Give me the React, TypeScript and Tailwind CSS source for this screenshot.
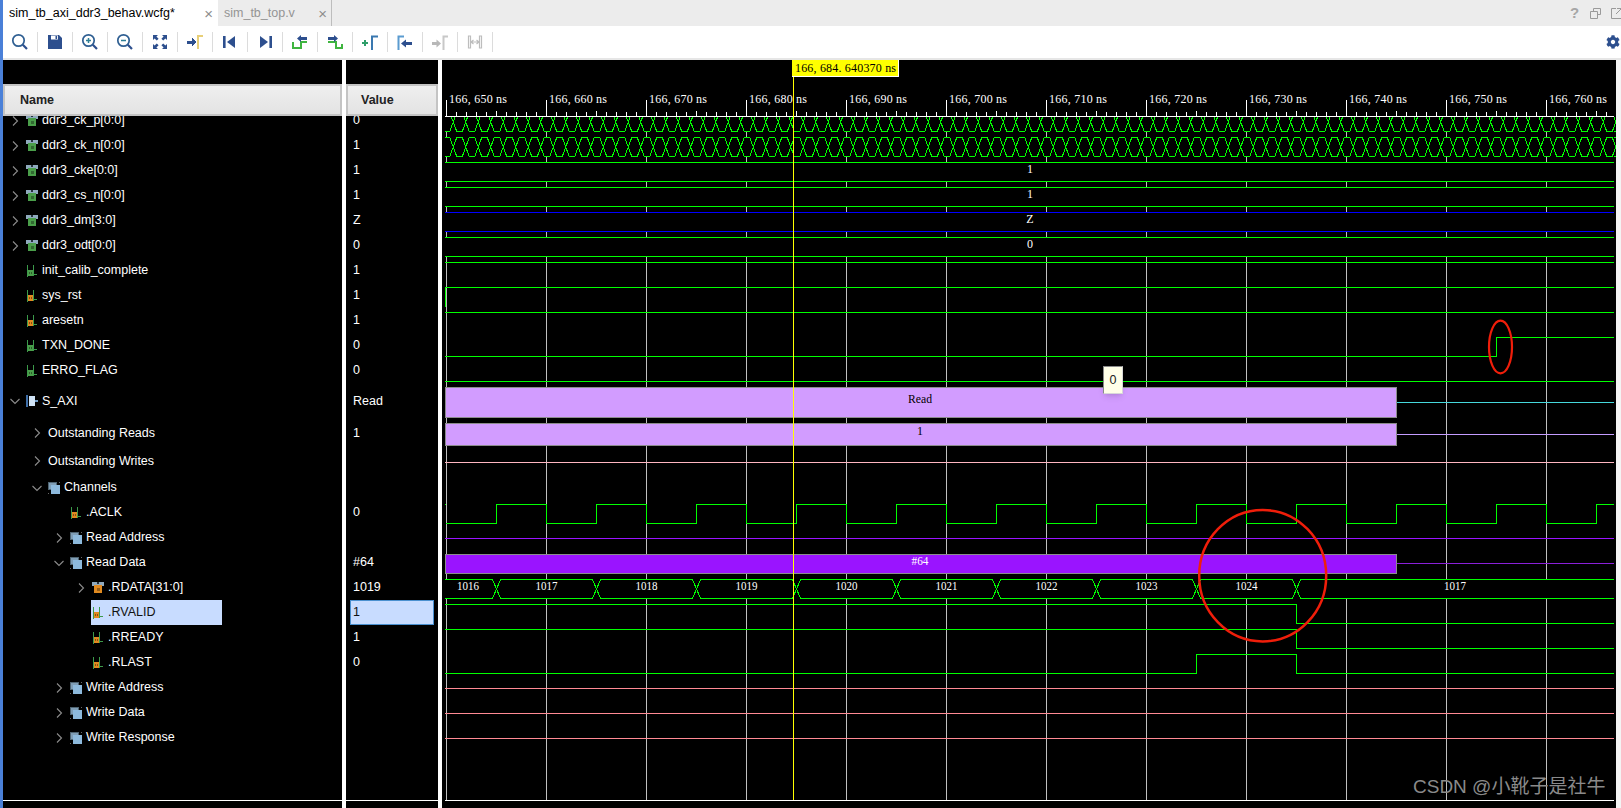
import React from "react";
import { FaCog } from "react-icons/fa";

const GREEN = "#00ff00";
const BLUE = "#2d4f8e";

// ---- small tree icons ----
function SignalIcon({ color }: { color: string }) {
  return (
    <svg width="12" height="12" viewBox="0 0 12 12" shapeRendering="crispEdges" className="shrink-0">
      <rect x="1" y="5" width="7" height="6" fill={color} />
      <path d="M1.5 0V12M7.5 0V11M8 9.5H11" stroke="#3c9a4a" fill="none" />
      <rect x="3" y="7" width="1" height="2" fill="#00000066" />
      <rect x="5" y="7" width="1" height="2" fill="#00000066" />
    </svg>
  );
}

function BusIcon({ color }: { color: string }) {
  return (
    <svg width="12" height="12" viewBox="0 0 12 12" shapeRendering="crispEdges" className="shrink-0">
      <rect x="0" y="0" width="12" height="4" fill="#8fa9bd" />
      <rect x="5" y="0" width="2" height="2" fill="#24313a" />
      <rect x="2" y="3" width="8" height="8" fill={color} />
      <rect x="4.5" y="6" width="3" height="3" fill="#00000055" />
    </svg>
  );
}

function IfaceIcon() {
  return (
    <svg width="12" height="12" viewBox="0 0 12 12" shapeRendering="crispEdges" className="shrink-0">
      <rect x="0" y="0" width="2" height="12" fill="#3f6fa8" />
      <rect x="3" y="1" width="6" height="10" fill="#cfe2f5" />
      <rect x="9" y="5" width="3" height="2" fill="#6f9cc8" />
    </svg>
  );
}

function GroupIcon() {
  return (
    <svg width="12" height="12" viewBox="0 0 12 12" shapeRendering="crispEdges" className="shrink-0">
      <rect x="0" y="0" width="9" height="8" fill="#4f6472" />
      <rect x="1" y="1" width="7" height="6" fill="#7f9db5" />
      <rect x="3" y="3" width="9" height="9" fill="#8db9dc" />
      <rect x="11" y="0" width="1" height="1" fill="#666" />
      <rect x="0" y="11" width="1" height="1" fill="#666" />
    </svg>
  );
}

function Chevron({ dir }: { dir?: "right" | "down" }) {
  if (!dir) return <span className="w-[22px] shrink-0" />;
  return (
    <span className="w-[22px] shrink-0 flex justify-center">
      <svg width="10" height="10" viewBox="0 0 10 10" fill="none" stroke="#8c8c8c" strokeWidth="1.1">
        {dir === "right" ? <path d="M3 .5 7.5 5 3 9.5" /> : <path d="M.5 3 5 7.5 9.5 3" />}
      </svg>
    </span>
  );
}

// ---- tree data ----
type Row = {
  name: string;
  value?: string;
  indent: string;
  height: string;
  chevron?: "right" | "down";
  icon?: "busG" | "busO" | "sigG" | "sigO" | "iface" | "group";
  selected?: boolean;
};

const L0 = "pl-px";
const L1 = "pl-[23px]";
const L2 = "pl-[45px]";
const L3 = "pl-[67px]";
const H = "h-[25px]";

const rows: Row[] = [
  { name: "ddr3_ck_p[0:0]", value: "0", indent: L0, height: H, chevron: "right", icon: "busG" },
  { name: "ddr3_ck_n[0:0]", value: "1", indent: L0, height: H, chevron: "right", icon: "busG" },
  { name: "ddr3_cke[0:0]", value: "1", indent: L0, height: H, chevron: "right", icon: "busG" },
  { name: "ddr3_cs_n[0:0]", value: "1", indent: L0, height: H, chevron: "right", icon: "busG" },
  { name: "ddr3_dm[3:0]", value: "Z", indent: L0, height: H, chevron: "right", icon: "busG" },
  { name: "ddr3_odt[0:0]", value: "0", indent: L0, height: H, chevron: "right", icon: "busG" },
  { name: "init_calib_complete", value: "1", indent: L0, height: H, icon: "sigG" },
  { name: "sys_rst", value: "1", indent: L0, height: H, icon: "sigO" },
  { name: "aresetn", value: "1", indent: L0, height: H, icon: "sigO" },
  { name: "TXN_DONE", value: "0", indent: L0, height: H, icon: "sigG" },
  { name: "ERRO_FLAG", value: "0", indent: L0, height: H, icon: "sigG" },
  { name: "S_AXI", value: "Read", indent: L0, height: "h-[36px]", chevron: "down", icon: "iface" },
  { name: "Outstanding Reads", value: "1", indent: L1, height: "h-[28px]", chevron: "right" },
  { name: "Outstanding Writes", indent: L1, height: "h-[28px]", chevron: "right" },
  { name: "Channels", indent: L1, height: H, chevron: "down", icon: "group" },
  { name: ".ACLK", value: "0", indent: L2, height: H, icon: "sigO" },
  { name: "Read Address", indent: L2, height: H, chevron: "right", icon: "group" },
  { name: "Read Data", value: "#64", indent: L2, height: H, chevron: "down", icon: "group" },
  { name: ".RDATA[31:0]", value: "1019", indent: L3, height: H, chevron: "right", icon: "busO" },
  { name: ".RVALID", value: "1", indent: L3, height: H, icon: "sigO", selected: true },
  { name: ".RREADY", value: "1", indent: L3, height: H, icon: "sigO" },
  { name: ".RLAST", value: "0", indent: L3, height: H, icon: "sigO" },
  { name: "Write Address", indent: L2, height: H, chevron: "right", icon: "group" },
  { name: "Write Data", indent: L2, height: H, chevron: "right", icon: "group" },
  { name: "Write Response", indent: L2, height: H, chevron: "right", icon: "group" },
];

function RowIcon({ icon }: { icon?: Row["icon"] }) {
  if (icon === "busG") return <BusIcon color="#4a9e4a" />;
  if (icon === "busO") return <BusIcon color="#e08a20" />;
  if (icon === "sigG") return <SignalIcon color="#4a9e4a" />;
  if (icon === "sigO") return <SignalIcon color="#e08a20" />;
  if (icon === "iface") return <IfaceIcon />;
  if (icon === "group") return <GroupIcon />;
  return null;
}

// ---- toolbar icons ----
function Glass({ mark }: { mark?: "plus" | "minus" }) {
  return (
    <svg width="18" height="18" viewBox="0 0 18 18" fill="none">
      <circle cx="7.5" cy="7.5" r="5.7" stroke="#2f5f92" strokeWidth="1.7" />
      <path d="M11.8 11.8 16 16" stroke={BLUE} strokeWidth="2.2" />
      {mark && <path d="M5 7.5h5" stroke="#2f7f96" strokeWidth="1.5" />}
      {mark === "plus" && <path d="M7.5 5v5" stroke="#2f7f96" strokeWidth="1.5" />}
    </svg>
  );
}

const toolbarIcons: React.ReactNode[] = [
  <Glass />,
  <svg width="16" height="16" viewBox="0 0 16 16">
    <path d="M1 1h11l3 3v11H1z" fill={BLUE} />
    <rect x="4" y="1.5" width="7" height="4" fill="#fff" />
    <rect x="8.5" y="2" width="1.6" height="3" fill={BLUE} />
  </svg>,
  <Glass mark="plus" />,
  <Glass mark="minus" />,
  <svg width="16" height="16" viewBox="0 0 16 16" fill={BLUE}>
    <path d="M1 1h5L4.4 2.6 6.6 4.8 4.8 6.6 2.6 4.4 1 6zM15 1v5l-1.6-1.6-2.2 2.2-1.8-1.8 2.2-2.2L10 1zM1 15v-5l1.6 1.6 2.2-2.2 1.8 1.8-2.2 2.2L6 15zM15 15h-5l1.6-1.6-2.2-2.2 1.8-1.8 2.2 2.2L15 10z" />
  </svg>,
  <svg width="16" height="16" viewBox="0 0 16 16" shapeRendering="crispEdges">
    <path d="M0 6.5h5V4l4 4-4 4V9.500H0z" fill={BLUE} />
    <path d="M11 15V2h5" stroke="#e8cf78" strokeWidth="2.4" fill="none" />
  </svg>,
  <svg width="14" height="14" viewBox="0 0 14 14" fill={BLUE}>
    <rect x="0" y="1" width="2.6" height="12" />
    <path d="M12 1v12L4 7z" />
  </svg>,
  <svg width="14" height="14" viewBox="0 0 14 14" fill={BLUE}>
    <rect x="11.400" y="1" width="2.6" height="12" />
    <path d="M2 1v12l8-6z" />
  </svg>,
  <svg width="16" height="14" viewBox="0 0 16 14">
    <path d="M1 7v6h8V7h6" fill="none" stroke="#3fb53f" strokeWidth="2" />
    <path d="M5 3.500 9 0v2h6v3H9v2z" fill={BLUE} />
  </svg>,
  <svg width="16" height="14" viewBox="0 0 16 14">
    <path d="M1 7h8v6h6V9" fill="none" stroke="#3fb53f" strokeWidth="2" />
    <path d="M11 3.500 7 0v2H1v3h6v2z" fill={BLUE} />
  </svg>,
  <svg width="16" height="15" viewBox="0 0 16 15">
    <path d="M0 8h6M3 5v6" stroke="#2f9e6a" strokeWidth="2" />
    <path d="M10 15V1.500h6" fill="none" stroke="#3a78b0" strokeWidth="2" />
  </svg>,
  <svg width="16" height="15" viewBox="0 0 16 15">
    <path d="M1.500 15V1.500H7" fill="none" stroke="#5b9bd0" strokeWidth="2" />
    <path d="M4 8.500 9 4.500V7h6v3H9v2.500z" fill={BLUE} />
  </svg>,
  <svg width="16" height="15" viewBox="0 0 16 15">
    <path d="M0 7h4.500V4.500L9 8.500l-4.500 4V10H0z" fill="#b8b8b8" />
    <path d="M11.500 15V1.500H16" fill="none" stroke="#c8c8c8" strokeWidth="2" />
  </svg>,
  <svg width="16" height="14" viewBox="0 0 16 14" fill="none" stroke="#bdbdbd" strokeWidth="1.2">
    <path d="M1.500 1v12h2V1zM12.500 1v12h2V1zM4 7h8M9.500 5 12 7 9.500 9M6.500 5 4 7 6.500 9" />
  </svg>,
];

// ---- waveform helpers ----
const END = 1614;
const px = (n: number) => n + 0.5;

function busPath(top: number, bot: number, edges: number[], half: number, startHigh = true) {
  const draw = (first: number, second: number) => {
    let a = first;
    let b = second;
    let d = `M445 ${px(a)}`;
    for (const e of edges) {
      d += `L${e - half} ${px(a)}L${e + half} ${px(b)}`;
      [a, b] = [b, a];
    }
    return d + `L${END} ${px(a)}`;
  };
  return startHigh ? draw(top, bot) + draw(bot, top) : draw(bot, top) + draw(top, bot);
}

const clockEdges = Array.from({ length: 94 }, (_, i) => 453.25 + i * 12.5);
const dataEdges = Array.from({ length: 9 }, (_, i) => 496.5 + i * 100);
const gridXs = Array.from({ length: 12 }, (_, i) => px(446 + i * 100));
const minorXs = Array.from({ length: 117 }, (_, i) => px(446 + i * 10));
const timeLabels = Array.from({ length: 12 }, (_, i) => 166650 + i * 10);

function fmt(n: number) {
  const s = String(n);
  return `${s.slice(0, 3)}, ${s.slice(3)} ns`;
}

let aclk = `M445 ${px(504)}H446M446 ${px(523)}H${px(496)}`;
for (let x = 496, up = true; x < END; x += 50, up = !up) {
  const next = Math.min(x + 50, END);
  aclk += `V${px(up ? 504 : 523)}H${next === END ? END : px(next)}`;
}

const BUS_TEXT = "'Liberation Serif', serif";

function BusRow({ top, bot, color = GREEN }: { top: number; bot: number; color?: string }) {
  return (
    <g>
      <rect x="445" y={top} width={END - 445} height={bot - top} fill="#000" />
      <path d={`M445 ${px(top)}H${END}M445 ${px(bot)}H${END}`} stroke={color} fill="none" />
    </g>
  );
}

function Label({ x, y, fill = "#fff", children, length }: { x: number; y: number; fill?: string; children: string; length?: number }) {
  return (
    <text x={x} y={y} fill={fill} fontFamily={BUS_TEXT} fontSize="12" textAnchor="middle" textLength={length} lengthAdjust="spacingAndGlyphs">
      {children}
    </text>
  );
}

function Waves() {
  return (
    <svg width="1174" height="748" viewBox="442 60 1174 748" shapeRendering="crispEdges" className="block">
      <path d={gridXs.map((x) => `M${x} 116V800`).join("")} stroke="#c0c0c0" />

      {/* clock rows */}
      <rect x="445" y="112" width={END - 445} height="19" fill="#000" />
      <path d={busPath(112, 131, clockEdges, 3.5, false)} stroke={GREEN} fill="none" />
      <rect x="445" y="137" width={END - 445} height="19" fill="#000" />
      <path d={busPath(137, 156, clockEdges, 3.5)} stroke={GREEN} fill="none" />

      <BusRow top={162} bot={181} />
      <BusRow top={187} bot={206} />
      <BusRow top={212} bot={231} color="#0000ff" />
      <BusRow top={237} bot={256} />
      <Label x={1030} y={172.5}>1</Label>
      <Label x={1030} y={197.5}>1</Label>
      <Label x={1030} y={222.5}>Z</Label>
      <Label x={1030} y={247.5}>0</Label>

      {/* single bit signals */}
      <g fill="none" stroke={GREEN}>
        <path d={`M445 ${px(262)}H${END}`} />
        <path d={`M445 ${px(306)}V${px(287)}H${END}`} />
        <path d={`M445 ${px(312)}H${END}`} />
        <path d={`M445 ${px(356)}H${px(1496)}V${px(337)}H${END}`} />
        <path d={`M445 ${px(381)}H${END}`} />
        <path d={aclk} />
        <path d={`M445 ${px(604)}H${px(1296)}V${px(623)}H${END}`} />
        <path d={`M445 ${px(629)}H${px(1296)}V${px(648)}H${END}`} />
        <path d={`M445 ${px(673)}H${px(1196)}V${px(654)}H${px(1296)}V${px(673)}H${END}`} />
      </g>
      <path d={`M445 ${px(462)}H${END}`} stroke="#ffb6c1" />
      <path d={`M445 ${px(538)}H${END}`} stroke="#9a14ff" />
      <path d={`M445 ${px(688)}H${END}M445 ${px(713)}H${END}M445 ${px(738)}H${END}`} stroke="#ff8a94" />

      {/* transaction bars */}
      <path d={`M1397 ${px(402)}H${END}`} stroke="#46d8dc" />
      <path d={`M1397 ${px(434)}H${END}`} stroke="#c49cff" />
      <path d={`M1397 ${px(563)}H${END}`} stroke="#8a20d8" />
      <rect x="445.5" y="387.5" width="951" height="30" fill="#d29cff" stroke="#8c8c8c" />
      <rect x="445.5" y="423.5" width="951" height="22" fill="#d29cff" stroke="#8c8c8c" />
      <rect x="445.5" y="554.5" width="951" height="19" fill="#9a14ff" stroke="#8c8c8c" />
      <Label x={920} y={403} fill="#000" length={24}>Read</Label>
      <Label x={920} y={435} fill="#000">1</Label>
      <Label x={920} y={565} length={17}>#64</Label>

      {/* RDATA */}
      <rect x="445" y="579" width={END - 445} height="19" fill="#000" />
      <path d={busPath(579, 598, dataEdges, 4)} stroke={GREEN} fill="none" />
      <Label x={468} y={590} length={22}>1016</Label>
      {[1017, 1018, 1019, 1020, 1021, 1022, 1023, 1024].map((v, i) => (
        <Label key={v} x={546.5 + i * 100} y={590} length={22}>{String(v)}</Label>
      ))}
      <Label x={1455} y={590} length={22}>1017</Label>

      <path d={`M445 ${px(800)}H${END}`} stroke="#fff" />

      {/* time ruler */}
      <rect x="442" y="60" width="1174" height="56" fill="#000" />
      <path
        d={
          `M445 ${px(116)}H${END}` +
          minorXs.map((x, i) => `M${x} ${i % 10 === 0 ? 100 : i % 5 === 0 ? 111 : 112}V116`).join("")
        }
        stroke="#fff"
      />
      {timeLabels.map((t, i) => (
        <text key={t} x={449 + i * 100} y="102.500" fill="#fff" fontFamily={BUS_TEXT} fontSize="12" textLength="58" lengthAdjust="spacing" xmlSpace="preserve">
          {fmt(t)}
        </text>
      ))}

      {/* cursor */}
      <path d={`M${px(793)} 77V800`} stroke="#ffff00" />
      <rect x="792" y="60" width="106" height="16" fill="#ffff00" />
      <path d={`M${px(898)} 60V${px(76)}H792`} stroke="#fff" fill="none" />
      <text x="795" y="71.500" fill="#000" fontFamily={BUS_TEXT} fontSize="12" textLength="101" lengthAdjust="spacing" xmlSpace="preserve">
        166, 684. 640370 ns
      </text>

      {/* hand drawn marks */}
      <ellipse cx="1262.700" cy="575.700" rx="63.500" ry="65.700" fill="none" stroke="#f01e0a" strokeWidth="2.500" shapeRendering="geometricPrecision" />
      <ellipse cx="1500.500" cy="347" rx="11.500" ry="26.300" fill="none" stroke="#f01e0a" strokeWidth="2.200" shapeRendering="geometricPrecision" />
    </svg>
  );
}

export default function App() {
  return (
    <div className="flex w-[1621px] h-[808px] overflow-hidden bg-white font-['Liberation_Sans',sans-serif] text-[12.5px]">
      <div className="w-[3px] shrink-0 bg-[#4a80d8]" />
      <div className="flex-1 flex flex-col min-w-0">
        {/* tabs */}
        <div className="h-[26px] flex bg-[#ececec] shrink-0">
          <div className="w-[215px] bg-white flex items-center pl-[6px] text-black">
            <span>sim_tb_axi_ddr3_behav.wcfg*</span>
            <span className="ml-auto mr-[5px] text-[#8c8c8c] text-[15px] leading-none">×</span>
          </div>
          <div className="w-[114px] flex items-center pl-[6px] text-[#949494] border-r border-[#bdbdbd]">
            <span>sim_tb_top.v</span>
            <span className="ml-auto mr-[4px] text-[#8c8c8c] text-[15px] leading-none">×</span>
          </div>
          <div className="ml-auto flex items-center -mr-[6px]">
            <span className="w-[21px] text-center text-[#a6a6a6] text-[15px] font-bold">?</span>
            <span className="w-[21px] flex justify-center">
              <svg width="11" height="11" viewBox="0 0 11 11" fill="none" stroke="#9a9a9a">
                <path d="M3.500 3V.5h7v6H8M.5 3.500h7v7h-7z" />
              </svg>
            </span>
            <span className="w-[21px] flex justify-center">
              <svg width="11" height="11" viewBox="0 0 11 11" fill="none" stroke="#9a9a9a">
                <path d="M5 .5H.5v10h10V6M6 .5h4.500V5M10 1 5 6" />
              </svg>
            </span>
          </div>
        </div>

        {/* toolbar */}
        <div className="h-[32px] flex items-center shrink-0 bg-white">
          {toolbarIcons.map((icon, i) => (
            <React.Fragment key={i}>
              <div className="w-[34px] flex justify-center items-center">{icon}</div>
              <div className="w-px h-5 bg-[#dcdcdc]" />
            </React.Fragment>
          ))}
          <div className="ml-auto pr-px flex">
            <FaCog size={14} color={BLUE} />
          </div>
        </div>
        <div className="h-[2px] shrink-0 bg-[#e6e6e6]" />

        {/* wave window */}
        <div className="flex-1 flex min-h-0">
          <div className="w-[339px] shrink-0 bg-black flex flex-col">
            <div className="h-6 shrink-0" />
            <div className="h-8 shrink-0 flex items-center pl-[15px] font-bold text-[#222] bg-gradient-to-b from-[#efefef] to-[#e3e3e3] border-2 border-[#c4c4c4]">
              Name
            </div>
            <div className="h-[684px] shrink-0 overflow-hidden">
              <div className="-mt-[8px]">
                {rows.map((r) => (
                  <div key={r.name} className={`flex items-center text-white ${r.height} ${r.indent}`}>
                    <Chevron dir={r.chevron} />
                    <div className={`flex items-center gap-1 h-full ${r.selected ? "bg-[#c8dcff] text-[#111] w-[131px] -ml-px pl-px" : ""}`}>
                      <RowIcon icon={r.icon} />
                      <span>{r.name}</span>
                    </div>
                  </div>
                ))}
              </div>
            </div>
            <div className="h-px shrink-0 bg-white" />
          </div>
          <div className="w-1 shrink-0 bg-white" />
          <div className="w-[92px] shrink-0 bg-black flex flex-col">
            <div className="h-6 shrink-0" />
            <div className="h-8 shrink-0 flex items-center pl-[13px] font-bold text-[#222] bg-gradient-to-b from-[#efefef] to-[#e3e3e3] border-2 border-[#c4c4c4]">
              Value
            </div>
            <div className="h-[684px] shrink-0 overflow-hidden">
              <div className="-mt-[8px]">
                {rows.map((r) =>
                  r.selected ? (
                    <div key={r.name} className={`${r.height} ml-1 w-[84px] flex items-center pl-[2px] text-[#111] bg-[#c8dcff] border border-[#4a90d0]`}>
                      {r.value}
                    </div>
                  ) : (
                    <div key={r.name} className={`${r.height} flex items-center pl-[7px] text-white`}>
                      {r.value}
                    </div>
                  ),
                )}
              </div>
            </div>
            <div className="h-px shrink-0 bg-white" />
          </div>
          <div className="w-1 shrink-0 bg-white" />
          <div className="relative w-[1174px] shrink-0 bg-black">
            <Waves />
            <div className="absolute left-[661px] top-[306px] w-5 h-[28px] flex items-center justify-center bg-[#ffffe8] border border-[#8a8a8a] border-r-[#d8d8d8] border-b-[#d8d8d8] shadow-md text-[#222]">
              0
            </div>
            <span className="absolute left-[971px] top-[715px] text-[19px] leading-6 text-[#8a8a8a] whitespace-nowrap font-['Liberation_Sans','Noto_Sans_CJK_SC',sans-serif]">
              CSDN @小靴子是社牛
            </span>
          </div>
          <div className="flex-1 bg-[#f4f4f4]" />
        </div>
      </div>
    </div>
  );
}
